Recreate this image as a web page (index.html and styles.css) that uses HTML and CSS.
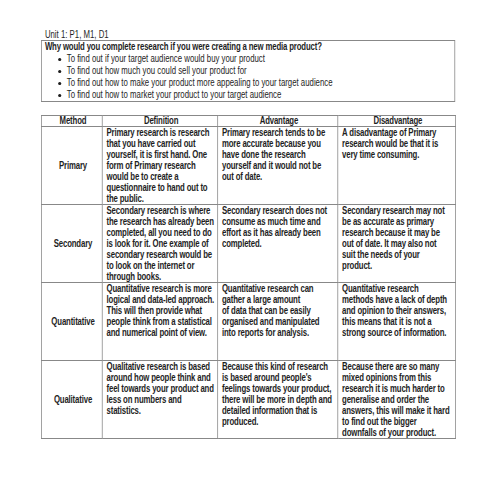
FILE: index.html
```html
<!DOCTYPE html>
<html>
<head>
<meta charset="utf-8">
<link rel="stylesheet" href="styles.css">
</head>
<body>
<div class="sheet">
<div class="page">
  <div class="unit">Unit 1: P1, M1, D1</div>
  <div class="box">
    <div class="question">Why would you complete research if you were creating a new media product?</div>
    <ul class="reasons">
      <li>To find out if your target audience would buy your product</li>
      <li>To find out how much you could sell your product for</li>
      <li>To find out how to make your product more appealing to your target audience</li>
      <li>To find out how to market your product to your target audience</li>
    </ul>
  </div>
  <table class="grid">
    <colgroup>
      <col class="c-method">
      <col class="c-def">
      <col class="c-adv">
      <col class="c-dis">
    </colgroup>
    <thead>
      <tr class="head">
        <th>Method</th>
        <th>Definition</th>
        <th>Advantage</th>
        <th>Disadvantage</th>
      </tr>
    </thead>
    <tbody>
      <tr class="row">
        <td class="method">Primary</td>
        <td>Primary research is research<br>that you have carried out<br>yourself, it is first hand. One<br>form of Primary research<br>would be to create a<br>questionnaire to hand out to<br>the public.</td>
        <td>Primary research tends to be<br>more accurate because you<br>have done the research<br>yourself and it would not be<br>out of date.</td>
        <td>A disadvantage of Primary<br>research would be that it is<br>very time consuming.</td>
      </tr>
      <tr class="row">
        <td class="method">Secondary</td>
        <td>Secondary research is where<br>the research has already been<br>completed, all you need to do<br>is look for it. One example of<br>secondary research would be<br>to look on the internet or<br>through books.</td>
        <td>Secondary research does not<br>consume as much time and<br>effort as it has already been<br>completed.</td>
        <td>Secondary research may not<br>be as accurate as primary<br>research because it may be<br>out of date. It may also not<br>suit the needs of your<br>product.</td>
      </tr>
      <tr class="row">
        <td class="method">Quantitative</td>
        <td>Quantitative research is more<br>logical and data-led approach.<br>This will then provide what<br>people think from a statistical<br>and numerical point of view.</td>
        <td>Quantitative research can<br>gather a large amount<br>of data that can be easily<br>organised and manipulated<br>into reports for analysis.</td>
        <td>Quantitative research<br>methods have a lack of depth<br>and opinion to their answers,<br>this means that it is not a<br>strong source of information.</td>
      </tr>
      <tr class="row">
        <td class="method">Qualitative</td>
        <td>Qualitative research is based<br>around how people think and<br>feel towards your product and<br>less on numbers and<br>statistics.</td>
        <td>Because this kind of research<br>is based around people's<br>feelings towards your product,<br>there will be more in depth and<br>detailed information that is<br>produced.</td>
        <td>Because there are so many<br>mixed opinions from this<br>research it is much harder to<br>generalise and order the<br>answers, this will make it hard<br>to find out the bigger<br>downfalls of your product.</td>
      </tr>
    </tbody>
  </table>
</div>
</div>
</body>
</html>
```
FILE: styles.css
```css
html, body {
  margin: 0;
  padding: 0;
  background: #ffffff;
  overflow: hidden;
}
body {
  font-family: "Liberation Sans", Arial, sans-serif;
  font-size: 10px;
  color: #1e1e1e;
}
.sheet {
  margin-left: 41px;
  width: 415px;
  overflow: hidden;
}
/* Arial Narrow look: lay out at full width, then condense horizontally */
.page {
  padding-top: 29px;
  width: 531px;
  transform: scaleX(0.78);
  transform-origin: left top;
}
.unit {
  line-height: 11px;
  padding-left: 5px;
  height: 11px;
}
.box {
  border: 1px solid #888888;
  height: 60px;
  padding: 0 0 0 4px;
}
.question {
  font-weight: bold;
  letter-spacing: -0.2px;
  line-height: 12px;
}
.reasons {
  margin: 0;
  padding: 0 0 0 28px;
  list-style: none;
}
.reasons li {
  line-height: 12px;
  position: relative;
}
.reasons li::before {
  content: "";
  position: absolute;
  left: -11px;
  top: 5px;
  width: 3.8px;
  height: 3px;
  border-radius: 50%;
  background: #1e1e1e;
}
.grid {
  margin-top: 13px;
  border-collapse: collapse;
  table-layout: fixed;
  width: 531px;
  font-weight: bold;
  letter-spacing: -0.2px;
}
.c-method { width: 78px; }
.c-def { width: 148px; }
.c-adv { width: 154px; }
.c-dis { width: 151px; }
.grid th, .grid td {
  border: 1px solid #888888;
  padding: 0 2px 0 5px;
  line-height: 11px;
  vertical-align: top;
  text-align: left;
  white-space: nowrap;
}
.grid th {
  text-align: center;
  height: 10px;
  line-height: 10px;
}
.row td {
  height: 77px;
}
.grid td.method {
  text-align: center;
  vertical-align: middle;
}
```
